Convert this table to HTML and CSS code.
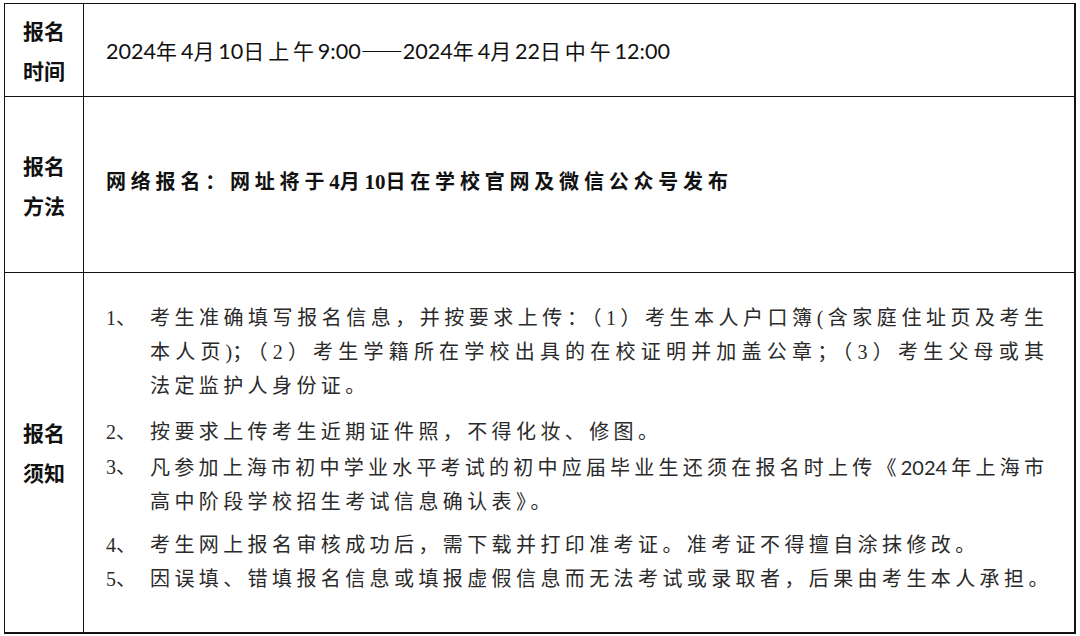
FILE: index.html
```html
<!DOCTYPE html>
<html lang="zh-CN">
<head>
<meta charset="utf-8">
<title>报名信息</title>
<link rel="stylesheet" href="styles.css">
</head>
<body>
<table class="form">
  <colgroup><col class="col-label"><col class="col-body"></colgroup>
  <tr class="row-time">
    <th class="label">报名<br>时间</th>
    <td class="time">2024<span class="k">年</span>4<span class="k">月</span>10<span class="k">日上午</span>9:00<span class="dash">——</span>2024<span class="k">年</span>4<span class="k">月</span>22<span class="k">日中午</span>12:00</td>
  </tr>
  <tr class="row-method">
    <th class="label">报名<br>方法</th>
    <td class="method">网络报名：网址将于<span class="n">4</span>月<span class="n">10</span>日在学校官网及微信公众号发布</td>
  </tr>
  <tr class="row-notice">
    <th class="label">报名<br>须知</th>
    <td class="notice">
      <div class="item">
        <div class="num">1、</div>
        <div class="txt">
          <div class="line full">考生准确填写报名信息，并按要求上传：（1）考生本人户口簿(含家庭住址页及考生</div>
          <div class="line full">本人页)；（2）考生学籍所在学校出具的在校证明并加盖公章；（3）考生父母或其</div>
          <div class="line">法定监护人身份证。</div>
        </div>
      </div>
      <div class="item gap-l">
        <div class="num">2、</div>
        <div class="txt"><div class="line">按要求上传考生近期证件照，不得化妆、修图。</div></div>
      </div>
      <div class="item gap-s">
        <div class="num">3、</div>
        <div class="txt">
          <div class="line full">凡参加上海市初中学业水平考试的初中应届毕业生还须在报名时上传《<span class="sans">2024</span>年上海市</div>
          <div class="line">高中阶段学校招生考试信息确认表》。</div>
        </div>
      </div>
      <div class="item gap-m">
        <div class="num">4、</div>
        <div class="txt"><div class="line">考生网上报名审核成功后，需下载并打印准考证。准考证不得擅自涂抹修改。</div></div>
      </div>
      <div class="item">
        <div class="num">5、</div>
        <div class="txt"><div class="line">因误填、错填报名信息或填报虚假信息而无法考试或录取者，后果由考生本人承担。</div></div>
      </div>
    </td>
  </tr>
</table>
</body>
</html>
```

FILE: styles.css
```css
html, body {
  margin: 0;
  padding: 0;
  background: #ffffff;
}

body {
  padding: 3px 0 0 4px;
  font-family: "Noto Sans CJK SC", sans-serif;
  color: #111;
}

.form {
  width: 1072px;
  border-collapse: collapse;
  table-layout: fixed;
  border-top: 1px solid #111;
  border-left: 1px solid #111;
  border-right: 2px solid #111;
  border-bottom: 2px solid #111;
}

.col-label { width: 79px; }

.form th,
.form td {
  border: 1px solid #111;
  padding: 0;
}

.row-time { height: 93px; }
.row-method { height: 176px; }
.row-notice { height: 360px; }

.label {
  font-family: "Noto Sans CJK SC", sans-serif;
  font-weight: 700;
  font-size: 21px;
  line-height: 40px;
  text-align: center;
  vertical-align: middle;
  color: #111;
}

.time {
  font-family: Lato, "Noto Sans CJK SC", sans-serif;
  font-size: 21.6px;
  line-height: 30px;
  vertical-align: middle;
  padding-left: 22px !important;
  color: #111;
  white-space: nowrap;
}

.time .k {
  font-family: "Noto Sans CJK SC", sans-serif;
  font-size: 21px;
  letter-spacing: 3.8px;
}

.time .dash {
  font-family: "Noto Sans CJK SC", sans-serif;
  font-size: 21px;
  letter-spacing: 4px;
  margin-right: -4px;
}

.method {
  font-family: "Noto Sans CJK SC", sans-serif;
  font-weight: 700;
  font-size: 20px;
  line-height: 30px;
  letter-spacing: 4.8px;
  vertical-align: middle;
  padding: 0 0 6px 22px !important;
  color: #111;
  white-space: nowrap;
}

.method .n {
  font-family: "Liberation Serif", serif;
  font-weight: 700;
  font-size: 21px;
  letter-spacing: 0;
}

.notice {
  vertical-align: top;
  padding: 28px 30px 0 22px !important;
  font-family: "Liberation Serif", "Noto Sans CJK SC", serif;
  font-size: 20px;
  line-height: 34px;
  color: #2a2a2a;
}

.item {
  display: flex;
}

.gap-l { margin-top: 12px; }
.gap-m { margin-top: 9px; }
.gap-s { margin-top: 1px; }

.num {
  width: 44px;
  flex: 0 0 44px;
  font-family: "Liberation Serif", "Noto Sans CJK SC", serif;
}

.txt {
  flex: 1 1 auto;
  min-width: 0;
}

.line {
  white-space: nowrap;
  letter-spacing: 4.4px;
}

.line.full {
  white-space: normal;
  text-align: justify;
  text-align-last: justify;
  letter-spacing: 0;
}

.sans {
  font-family: Lato, sans-serif;
  letter-spacing: 0;
}
```
